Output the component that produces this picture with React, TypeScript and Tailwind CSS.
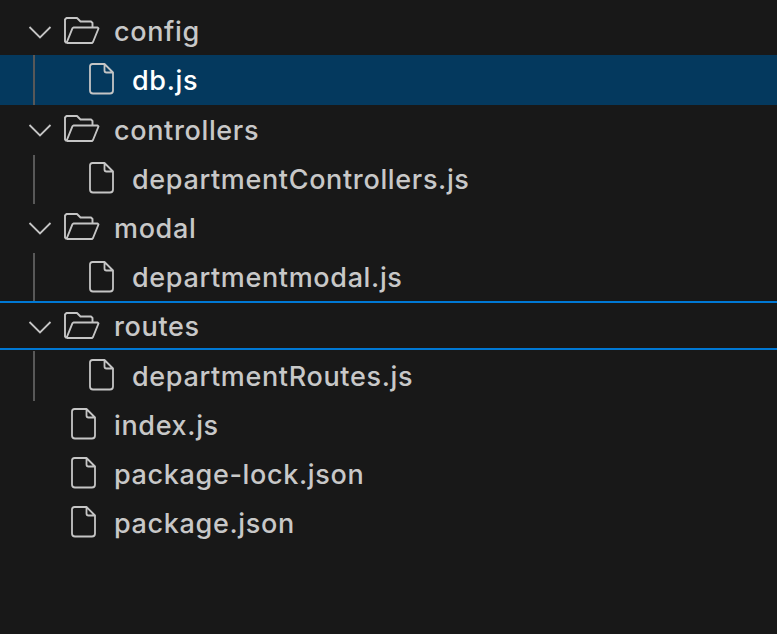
const Chevron = () => (
  <svg width="24" height="14" viewBox="0 0 24 14" fill="none" className="shrink-0">
    <path d="M1.5 2 L12 12.5 L22.5 2" stroke="#c5c5c5" strokeWidth="1.8" />
  </svg>
);

const Folder = () => (
  <svg width="36" height="28" viewBox="0 0 36 28" fill="none" className="mb-[2px] shrink-0">
    <path
      d="M2.5 26 L1 24.5 V2.5 L2.5 1 H13 L16.5 4.5 H27 L28.5 6 V10.5 M2.5 26 H28 L29 25 L34.5 11.5 L33.5 10.5 H9.5 L8.5 11.2 L2.5 26 M9 11 V10.5"
      stroke="#c5c5c5"
      strokeWidth="1.9"
      strokeLinejoin="round"
    />
  </svg>
);

const FileIcon = () => (
  <svg width="25" height="32" viewBox="0 0 25 32" fill="none" className="mb-[2px] shrink-0">
    <path
      d="M3.5 1 H15.5 L24 9.5 V27.5 Q24 30.5 21 30.5 H4 Q1 30.5 1 27.5 V3.5 Q1 1 3.5 1 Z M15.5 1 V7.5 Q15.5 9.5 17.5 9.5 H24"
      stroke="#c5c5c5"
      strokeWidth="1.8"
      strokeLinejoin="round"
    />
  </svg>
);

const font = { fontFamily: "Inter, sans-serif" };

function FolderRow({ name, focus }: { name: string; focus?: boolean }) {
  return (
    <div className="relative flex h-[49.2px] items-center pl-[28px]">
      {focus && <div className="absolute inset-x-0 top-[-1px] h-[49px] border-y-2 border-[#0078d4]" />}
      <Chevron />
      <div className="ml-[12px]">
        <Folder />
      </div>
      <span className="ml-[14px] pt-[2px] text-[27px] font-[450] tracking-[0.65px] text-[#c8c8c8]">{name}</span>
    </div>
  );
}

function ChildRow({ name, selected }: { name: string; selected?: boolean }) {
  return (
    <div className={selected ? "-mt-px flex h-[50.2px] bg-[#04395e] pl-[33px]" : "flex h-[49.2px] pl-[33px]"}>
      <div className="flex items-center border-l-2 border-[#585858] pl-[54px]">
        <FileIcon />
        <span
          className={
            selected
              ? "ml-[18px] pt-[2px] text-[27px] font-[450] tracking-[0.65px] text-white"
              : "ml-[18px] pt-[2px] text-[27px] font-[450] tracking-[0.65px] text-[#c8c8c8]"
          }
        >
          {name}
        </span>
      </div>
    </div>
  );
}

function RootFile({ name }: { name: string }) {
  return (
    <div className="flex h-[49.2px] items-center pl-[71px]">
      <FileIcon />
      <span className="ml-[18px] pt-[2px] text-[27px] font-[450] tracking-[0.65px] text-[#c8c8c8]">{name}</span>
    </div>
  );
}

export default function App() {
  return (
    <div className="h-[634px] w-[777px] overflow-hidden bg-[#181818] pt-[7px]" style={font}>
      <FolderRow name="config" />
      <ChildRow name="db.js" selected />
      <FolderRow name="controllers" />
      <ChildRow name="departmentControllers.js" />
      <FolderRow name="modal" />
      <ChildRow name="departmentmodal.js" />
      <FolderRow name="routes" focus />
      <ChildRow name="departmentRoutes.js" />
      <RootFile name="index.js" />
      <RootFile name="package-lock.json" />
      <RootFile name="package.json" />
    </div>
  );
}
